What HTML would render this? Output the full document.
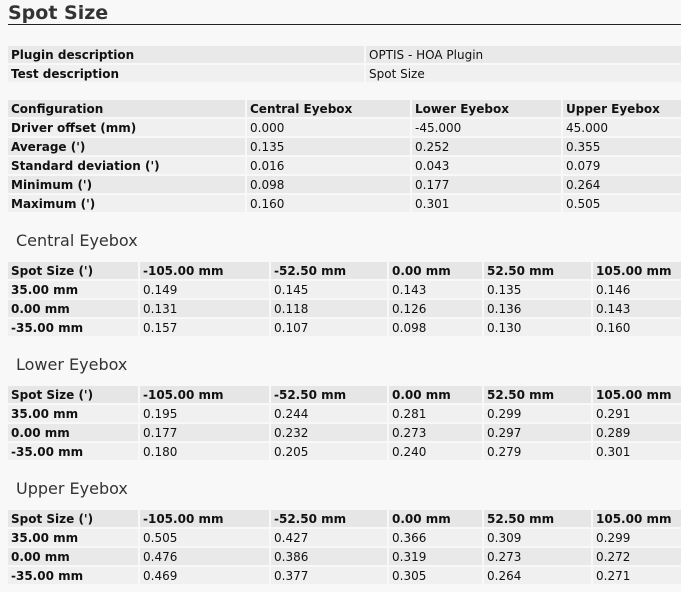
<!DOCTYPE html>
<html><head><meta charset="utf-8"><style>
body{margin:0;background:#f8f8f8;width:681px;height:592px;overflow:hidden;font-family:"DejaVu Sans",Verdana,sans-serif;font-size:12px;color:#111;position:relative}
h1{position:absolute;left:8px;top:2px;margin:0;font-size:19px;font-weight:bold;color:#333;width:673px;border-bottom:1px solid #222;height:22px;line-height:22px}
table{position:absolute;left:6px;border-spacing:2px;table-layout:fixed;width:680px}
td{height:16px;padding:1px 0 0 3px;line-height:16px;white-space:nowrap;overflow:hidden;background:#f0f0f0}
tr.h td{background:#e6e6e6;font-weight:bold}
tr.d td{background:#e9e9e9}
td.b{font-weight:bold}
h2{position:absolute;left:16px;margin:0;font-weight:normal;font-size:16px;color:#333}
</style></head><body>
<h1>Spot Size</h1>
<table style="top:44px"><colgroup><col style="width:356px"><col></colgroup>
<tr class="d"><td class="b">Plugin description</td><td>OPTIS - HOA Plugin</td></tr>
<tr><td class="b">Test description</td><td>Spot Size</td></tr></table>
<table style="top:98px"><colgroup><col style="width:237px"><col style="width:163px"><col style="width:149px"><col></colgroup>
<tr class="h"><td>Configuration</td><td>Central Eyebox</td><td>Lower Eyebox</td><td>Upper Eyebox</td></tr>
<tr><td class="b">Driver offset (mm)</td><td>0.000</td><td>-45.000</td><td>45.000</td></tr>
<tr class="d"><td class="b">Average (')</td><td>0.135</td><td>0.252</td><td>0.355</td></tr>
<tr><td class="b">Standard deviation (')</td><td>0.016</td><td>0.043</td><td>0.079</td></tr>
<tr class="d"><td class="b">Minimum (')</td><td>0.098</td><td>0.177</td><td>0.264</td></tr>
<tr><td class="b">Maximum (')</td><td>0.160</td><td>0.301</td><td>0.505</td></tr></table>

<h2 style="top:231px">Central Eyebox</h2>
<table style="top:260px"><colgroup><col style="width:130px"><col style="width:129px"><col style="width:116px"><col style="width:93px"><col style="width:107px"><col></colgroup>
<tr class="h"><td>Spot Size (')</td><td>-105.00 mm</td><td>-52.50 mm</td><td>0.00 mm</td><td>52.50 mm</td><td>105.00 mm</td></tr>
<tr><td class="b">35.00 mm</td><td>0.149</td><td>0.145</td><td>0.143</td><td>0.135</td><td>0.146</td></tr>
<tr class="d"><td class="b">0.00 mm</td><td>0.131</td><td>0.118</td><td>0.126</td><td>0.136</td><td>0.143</td></tr>
<tr><td class="b">-35.00 mm</td><td>0.157</td><td>0.107</td><td>0.098</td><td>0.130</td><td>0.160</td></tr></table>

<h2 style="top:355px">Lower Eyebox</h2>
<table style="top:384px"><colgroup><col style="width:130px"><col style="width:129px"><col style="width:116px"><col style="width:93px"><col style="width:107px"><col></colgroup>
<tr class="h"><td>Spot Size (')</td><td>-105.00 mm</td><td>-52.50 mm</td><td>0.00 mm</td><td>52.50 mm</td><td>105.00 mm</td></tr>
<tr><td class="b">35.00 mm</td><td>0.195</td><td>0.244</td><td>0.281</td><td>0.299</td><td>0.291</td></tr>
<tr class="d"><td class="b">0.00 mm</td><td>0.177</td><td>0.232</td><td>0.273</td><td>0.297</td><td>0.289</td></tr>
<tr><td class="b">-35.00 mm</td><td>0.180</td><td>0.205</td><td>0.240</td><td>0.279</td><td>0.301</td></tr></table>

<h2 style="top:479px">Upper Eyebox</h2>
<table style="top:508px"><colgroup><col style="width:130px"><col style="width:129px"><col style="width:116px"><col style="width:93px"><col style="width:107px"><col></colgroup>
<tr class="h"><td>Spot Size (')</td><td>-105.00 mm</td><td>-52.50 mm</td><td>0.00 mm</td><td>52.50 mm</td><td>105.00 mm</td></tr>
<tr><td class="b">35.00 mm</td><td>0.505</td><td>0.427</td><td>0.366</td><td>0.309</td><td>0.299</td></tr>
<tr class="d"><td class="b">0.00 mm</td><td>0.476</td><td>0.386</td><td>0.319</td><td>0.273</td><td>0.272</td></tr>
<tr><td class="b">-35.00 mm</td><td>0.469</td><td>0.377</td><td>0.305</td><td>0.264</td><td>0.271</td></tr></table>
</body></html>
